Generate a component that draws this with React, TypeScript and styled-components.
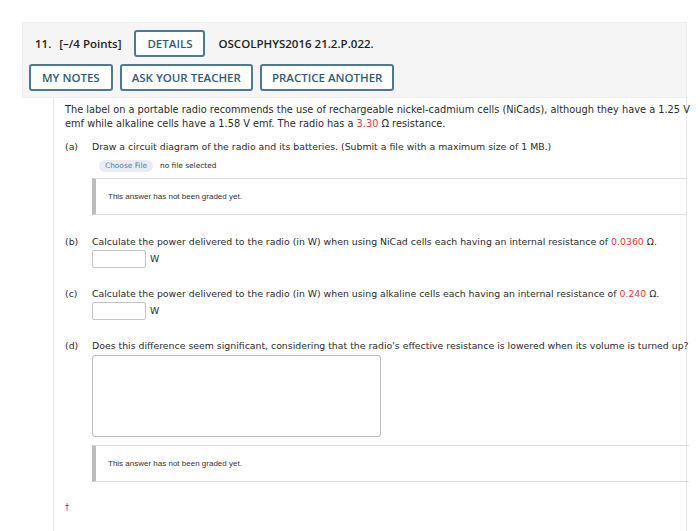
import React from 'react';
import styled, { createGlobalStyle } from 'styled-components';

const GlobalStyle = createGlobalStyle`
  html, body {
    margin: 0;
    padding: 0;
    background: #fff;
  }
  body {
    font-family: "DejaVu Sans", Verdana, sans-serif;
    color: #2b2b2b;
  }
`;

const Page = styled.div`
  width: 700px;
  height: 531px;
  overflow: hidden;
  padding-top: 22px;
  box-sizing: border-box;
`;

const Header = styled.div`
  margin-left: 22px;
  width: 665px;
  box-sizing: border-box;
  background: #f5f5f5;
  border: 1px solid #eeeeee;
  padding: 7px 6px 6px 6px;
  font-family: "Open Sans", "Liberation Sans", sans-serif;
  font-weight: 600;
`;

const TopRow = styled.div`
  display: flex;
  align-items: center;
  padding-left: 6px;
  height: 27px;
  font-size: 11.5px;
  color: #222;
`;

const Number = styled.span`
  margin-right: 8px;
`;

const Points = styled.span`
  margin-right: 13px;
`;

const Code = styled.span`
  margin-left: 13px;
`;

const ButtonRow = styled.div`
  display: flex;
  gap: 7px;
  margin-top: 7px;
`;

const ToolButton = styled.button<{ $pad?: number }>`
  margin: 0;
  height: 27px;
  box-sizing: border-box;
  padding: 0 ${p => (p.$pad ? p.$pad : 10)}px;
  background: #fff;
  border: 2px solid #4d7a93;
  border-radius: 3px;
  color: #2e5b78;
  font-family: "Open Sans", "Liberation Sans", sans-serif;
  font-weight: 600;
  font-size: 11.5px;
  line-height: 1;
`;

const Content = styled.div`
  margin-left: 53px;
  width: 634px;
  min-height: 440px;
  box-sizing: border-box;
  border-left: 1px solid #e6e6e6;
  border-right: 1px solid #e6e6e6;
  padding: 5px 0 0 11px;
  font-size: 9.35px;
  line-height: 14px;
`;

const Intro = styled.p`
  margin: 0;
  font-size: 9.8px;
  white-space: nowrap;
`;

const Red = styled.span`
  color: #e23a3a;
`;

const Part = styled.div<{ $top: number }>`
  display: flex;
  margin-top: ${p => p.$top}px;
`;

const Label = styled.span`
  width: 27px;
  flex: none;
`;

const PartBody = styled.div`
  flex: 1;
  white-space: nowrap;
`;

const FileRow = styled.div`
  display: flex;
  align-items: center;
  gap: 7px;
  margin: 5px 0 0 7px;
  font-size: 7.4px;
`;

const FileButton = styled.span`
  display: inline-block;
  background: #e9edf2;
  color: #4a7fb5;
  border-radius: 6px;
  padding: 0 6px;
  height: 12px;
  line-height: 12px;
`;

const Graded = styled.div<{ $top: number }>`
  margin-top: ${p => p.$top}px;
  height: 37px;
  box-sizing: border-box;
  border: 1px solid #dedede;
  border-left: 4px solid #bdbdbd;
  border-right: none;
  display: flex;
  align-items: center;
  padding-left: 12px;
  font-family: "Liberation Sans", Arial, sans-serif;
  font-size: 8px;
  color: #333;
`;

const AnswerRow = styled.div`
  display: flex;
  align-items: center;
  gap: 4px;
  margin-top: 1px;
`;

const NumberInput = styled.div`
  width: 54px;
  height: 18px;
  box-sizing: border-box;
  border: 1px solid #c4c4c4;
  border-radius: 2px;
  background: #fff;
`;

const TextArea = styled.div`
  width: 289px;
  height: 82px;
  box-sizing: border-box;
  margin-top: 2px;
  border: 1px solid #bdbdbd;
  border-radius: 3px;
  background: #fff;
`;

const Dagger = styled.div`
  margin-top: 19px;
  color: #4b3f9a;
  font-size: 8px;
`;

export default function App() {
  return (
    <Page>
      <GlobalStyle />
      <Header>
        <TopRow>
          <Number>11.</Number>
          <Points>[–/4 Points]</Points>
          <ToolButton $pad={11}>DETAILS</ToolButton>
          <Code>OSCOLPHYS2016 21.2.P.022.</Code>
        </TopRow>
        <ButtonRow>
          <ToolButton $pad={11}>MY NOTES</ToolButton>
          <ToolButton>ASK YOUR TEACHER</ToolButton>
          <ToolButton>PRACTICE ANOTHER</ToolButton>
        </ButtonRow>
      </Header>
      <Content>
        <Intro>
          The label on a portable radio recommends the use of rechargeable nickel-cadmium cells (NiCads), although they have a 1.25 V
          <br />
          emf while alkaline cells have a 1.58 V emf. The radio has a <Red>3.30</Red> Ω resistance.
        </Intro>
        <Part $top={9}>
          <Label>(a)</Label>
          <PartBody>
            Draw a circuit diagram of the radio and its batteries. (Submit a file with a maximum size of 1 MB.)
            <FileRow>
              <FileButton>Choose File</FileButton>
              <span>no file selected</span>
            </FileRow>
            <Graded $top={5}>This answer has not been graded yet.</Graded>
          </PartBody>
        </Part>
        <Part $top={20}>
          <Label>(b)</Label>
          <PartBody>
            Calculate the power delivered to the radio (in W) when using NiCad cells each having an internal resistance of <Red>0.0360</Red> Ω.
            <AnswerRow>
              <NumberInput />
              <span>W</span>
            </AnswerRow>
          </PartBody>
        </Part>
        <Part $top={19}>
          <Label>(c)</Label>
          <PartBody>
            Calculate the power delivered to the radio (in W) when using alkaline cells each having an internal resistance of <Red>0.240</Red> Ω.
            <AnswerRow>
              <NumberInput />
              <span>W</span>
            </AnswerRow>
          </PartBody>
        </Part>
        <Part $top={19}>
          <Label>(d)</Label>
          <PartBody>
            Does this difference seem significant, considering that the radio's effective resistance is lowered when its volume is turned up?
            <TextArea />
            <Graded $top={8}>This answer has not been graded yet.</Graded>
          </PartBody>
        </Part>
        <Dagger>†</Dagger>
      </Content>
    </Page>
  );
}
